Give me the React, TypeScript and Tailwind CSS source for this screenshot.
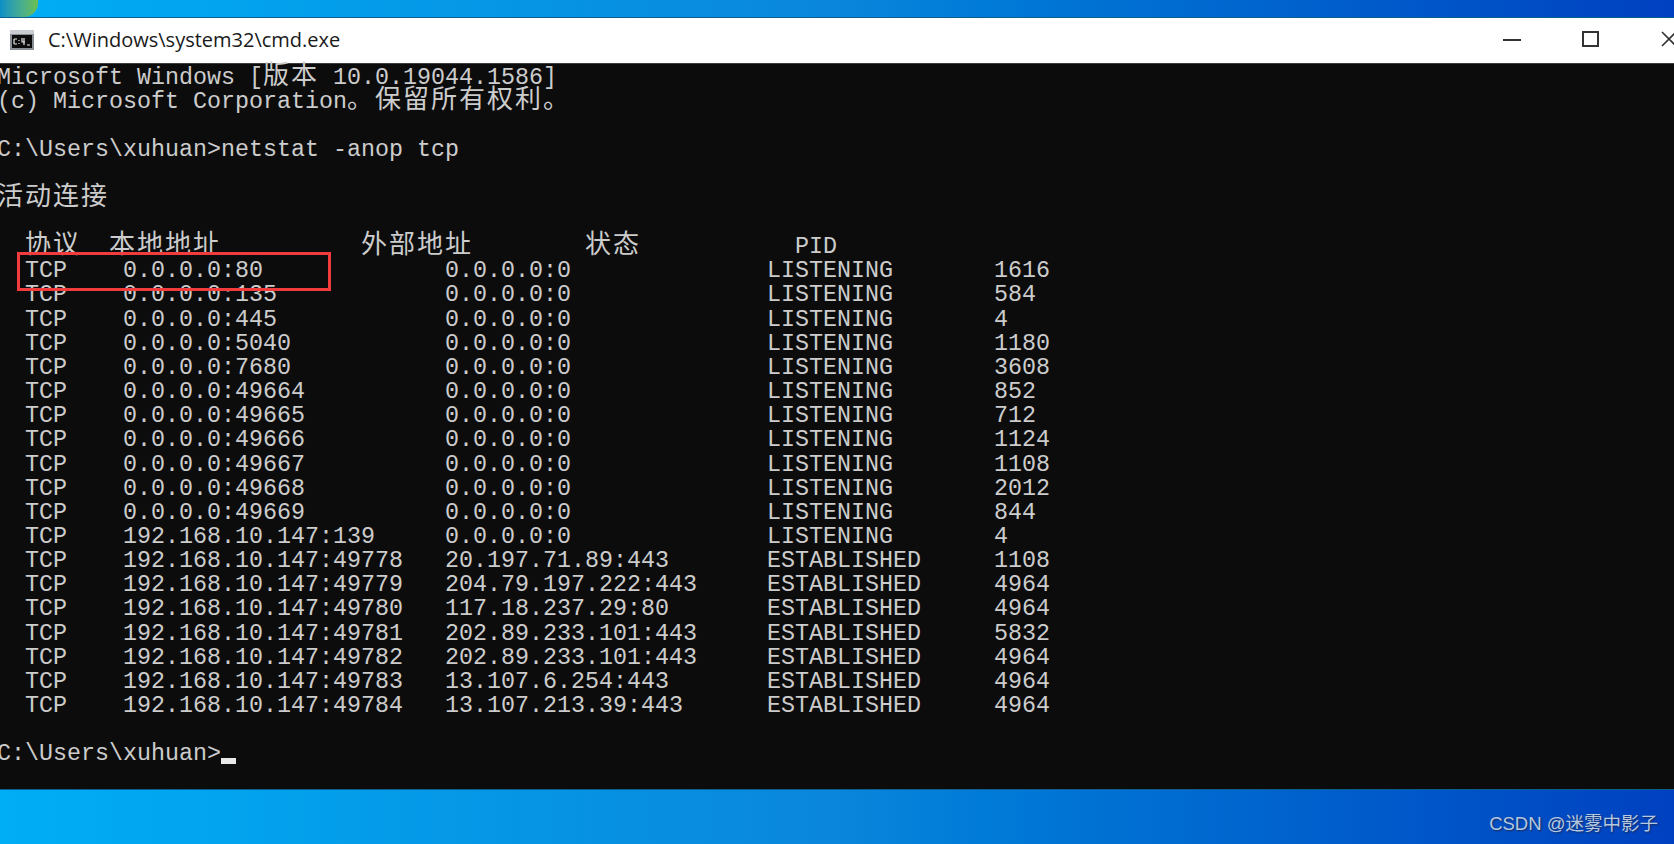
const mono = "font-['Liberation_Mono','Noto_Sans_CJK_SC',monospace]";

const rows: [string, string, string, string][] = [
  ["0.0.0.0:80", "0.0.0.0:0", "LISTENING", "1616"],
  ["0.0.0.0:135", "0.0.0.0:0", "LISTENING", "584"],
  ["0.0.0.0:445", "0.0.0.0:0", "LISTENING", "4"],
  ["0.0.0.0:5040", "0.0.0.0:0", "LISTENING", "1180"],
  ["0.0.0.0:7680", "0.0.0.0:0", "LISTENING", "3608"],
  ["0.0.0.0:49664", "0.0.0.0:0", "LISTENING", "852"],
  ["0.0.0.0:49665", "0.0.0.0:0", "LISTENING", "712"],
  ["0.0.0.0:49666", "0.0.0.0:0", "LISTENING", "1124"],
  ["0.0.0.0:49667", "0.0.0.0:0", "LISTENING", "1108"],
  ["0.0.0.0:49668", "0.0.0.0:0", "LISTENING", "2012"],
  ["0.0.0.0:49669", "0.0.0.0:0", "LISTENING", "844"],
  ["192.168.10.147:139", "0.0.0.0:0", "LISTENING", "4"],
  ["192.168.10.147:49778", "20.197.71.89:443", "ESTABLISHED", "1108"],
  ["192.168.10.147:49779", "204.79.197.222:443", "ESTABLISHED", "4964"],
  ["192.168.10.147:49780", "117.18.237.29:80", "ESTABLISHED", "4964"],
  ["192.168.10.147:49781", "202.89.233.101:443", "ESTABLISHED", "5832"],
  ["192.168.10.147:49782", "202.89.233.101:443", "ESTABLISHED", "4964"],
  ["192.168.10.147:49783", "13.107.6.254:443", "ESTABLISHED", "4964"],
  ["192.168.10.147:49784", "13.107.213.39:443", "ESTABLISHED", "4964"],
];

// full-width characters take two console cells (28px)
function Cjk({ children }: { children: string }) {
  return <span className="text-[26px] leading-[0] tracking-[2px]">{children}</span>;
}

function CmdIcon() {
  return (
    <svg width="24" height="20" viewBox="0 0 24 20" className="shrink-0">
      <rect x="0" y="0" width="24" height="20" fill="#8a8f96" />
      <rect x="0" y="0" width="24" height="4" fill="#c9ccd0" />
      <rect x="2" y="5" width="20" height="13" fill="#0c0c0c" />
      <path d="M4 9h3M4 14h3M4 9v5M9 10v1M9 13v1M12 8v4h3M14 8v7M17 15h3" stroke="#e8e8e8" strokeWidth="1.2" fill="none" />
    </svg>
  );
}

export default function App() {
  return (
    <div className="w-[1674px] h-[844px] overflow-hidden flex flex-col bg-gradient-to-r from-[#00aef5] via-[#0a86dc] to-[#0040c0]">
      {/* desktop strip above the window */}
      <div className="h-[18px] shrink-0 flex border-b border-[#0a5f8f]">
        <div className="w-[38px] h-full rounded-br-[14px] bg-gradient-to-r from-[#0a8fc8] to-[#6cc04a]" />
      </div>

      {/* window */}
      <div className="flex flex-col shrink-0 h-[771px] relative overflow-hidden">
        <div className="h-[46px] shrink-0 bg-white border-b border-[#3c3c3c] flex items-center pl-[10px] pb-[2px] relative">
          <CmdIcon />
          <span className="ml-[14px] text-[20px] text-[#1a1a1a] font-['Open_Sans','Noto_Sans',sans-serif]">
            C:\Windows\system32\cmd.exe
          </span>
          <div className="absolute left-[1503px] top-[21px] w-[18px] h-[2px] bg-[#333333]" />
          <div className="absolute left-[1582px] top-[13px] w-[17px] h-[16px] border-2 border-[#333333]" />
          <svg className="absolute left-[1660px] top-[13px]" width="16" height="16" viewBox="0 0 16 16">
            <path d="M2 1l14 14M16 1L2 15" stroke="#333333" strokeWidth="1.6" />
          </svg>
        </div>

        <div className="flex-1 bg-[#0c0c0c] pt-[2px] relative">
          <pre className={`${mono} -ml-[3px] text-[23.33px] leading-[24.15px] text-[#cccccc]`}>
            <div>Microsoft Windows [<Cjk>版本</Cjk> 10.0.19044.1586]</div>
            <div>(c) Microsoft Corporation<Cjk>。保留所有权利。</Cjk></div>
            <div>&nbsp;</div>
            <div>C:\Users\xuhuan&gt;netstat -anop tcp</div>
            <div>&nbsp;</div>
            <div><Cjk>活动连接</Cjk></div>
            <div>&nbsp;</div>
            <div>
              {"  "}<Cjk>协议</Cjk>{"  "}<Cjk>本地地址</Cjk>{"          "}<Cjk>外部地址</Cjk>{"        "}<Cjk>状态</Cjk>{"           "}PID
            </div>
            {rows.map((r) => (
              <div key={r[0]}>
                {"  TCP    " + r[0].padEnd(23) + r[1].padEnd(23) + r[2].padEnd(16)}
                <span className="ml-[3px]">{r[3]}</span>
              </div>
            ))}
            <div>&nbsp;</div>
            <div>
              C:\Users\xuhuan&gt;
              <span className="inline-block w-[15px] h-[6px] bg-[#e8e8e8] align-[-4px]" />
            </div>
          </pre>

          {/* red annotation box */}
          <div className="absolute left-[17px] top-[188px] w-[314px] h-[39px] border-[3px] border-[#f03c3c]" />
        </div>
      </div>

      {/* desktop strip below the window */}
      <div className="flex-1 flex items-center justify-end pr-[16px] pt-[14px] border-t border-[#0a5f8f]">
        <span className="text-[18.5px] text-[#b4c8e0] font-['Liberation_Sans','Noto_Sans_CJK_SC',sans-serif] [text-shadow:1px_1px_2px_#1a2a5a]">
          CSDN @迷雾中影子
        </span>
      </div>
    </div>
  );
}
